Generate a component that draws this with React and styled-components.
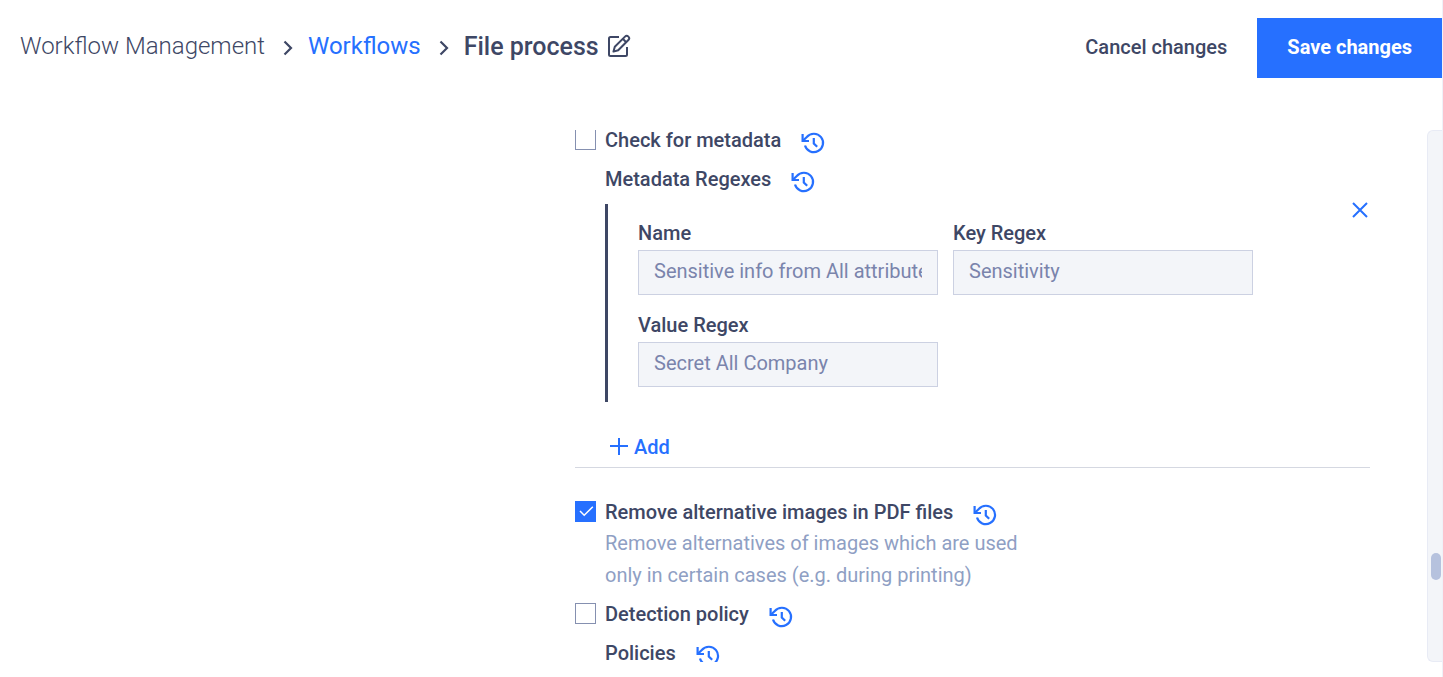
import React, { useState } from "react";
import styled, { createGlobalStyle } from "styled-components";

const GlobalStyle = createGlobalStyle`
  * {
    box-sizing: border-box;
  }

  body {
    margin: 0;
    background: #ffffff;
    color: #3e4765;
    font-family: Roboto, "Liberation Sans", sans-serif;
    font-size: 20px;
    font-weight: 500;
  }

  button,
  input {
    font: inherit;
  }
`;

const Page = styled.div`
  height: 100vh;
  display: flex;
  flex-direction: column;
  padding: 18px 0 15px;
  border-right: 1px solid #eff1f8;
  overflow: hidden;
`;

const Header = styled.header`
  display: flex;
  align-items: flex-start;
  justify-content: space-between;
  margin-bottom: 52px;
`;

const Breadcrumb = styled.nav`
  display: flex;
  align-items: center;
  height: 56px;
  padding-left: 20px;
  font-size: 24px;
  white-space: nowrap;
`;

const Crumb = styled.a`
  color: ${({ $active }) => ($active ? "#2670ff" : "inherit")};
  font-weight: ${({ $active }) => ($active ? 400 : 300)};
  text-decoration: none;
`;

const Current = styled.h1`
  margin: 0;
  font-size: 25px;
  font-weight: 500;
`;

const Chevron = styled.svg`
  width: 12px;
  height: 16px;
  margin: 4px 14px 0 17px;
`;

const IconButton = styled.button`
  display: flex;
  align-items: center;
  justify-content: center;
  flex: none;
  width: ${({ $size }) => $size || 24}px;
  height: ${({ $size }) => $size || 24}px;
  padding: 0;
  border: 0;
  background: none;
  color: ${({ $dark }) => ($dark ? "inherit" : "#2670ff")};
  cursor: pointer;
`;

const EditButton = styled(IconButton)`
  margin-left: 8px;
`;

const Actions = styled.div`
  display: flex;
`;

const Button = styled.button`
  height: 60px;
  padding: 0 30px 2px;
  border: 0;
  background: ${({ $primary }) => ($primary ? "#2670ff" : "transparent")};
  color: ${({ $primary }) => ($primary ? "#ffffff" : "inherit")};
  font-weight: ${({ $primary }) => ($primary ? 700 : 500)};
  white-space: nowrap;
  cursor: pointer;
`;

const Body = styled.main`
  flex: 1;
  min-height: 0;
  display: flex;
`;

const Viewport = styled.div`
  flex: 1;
  min-width: 0;
  padding: 0 57px 0 575px;
  overflow: hidden;
`;

const Settings = styled.div`
  margin-top: -10px;
`;

const Track = styled.div`
  display: flex;
  flex-direction: column;
  align-items: flex-end;
  width: 15px;
  border: 1px solid #e8ebf5;
  border-right: 0;
  border-radius: 6px 0 0 6px;
  background: #f3f5f9;
`;

const TrackSpace = styled.div`
  flex: ${({ $grow }) => $grow};
`;

const Thumb = styled.div`
  width: 10px;
  height: 27px;
  margin-right: 1px;
  border-radius: 5px;
  background: #b6c2de;
`;

const Row = styled.div`
  display: flex;
  align-items: center;
  height: 39px;
  padding-left: ${({ $indent }) => ($indent ? 30 : 0)}px;
`;

const CheckLabel = styled.label`
  display: flex;
  align-items: center;
  gap: 9px;
`;

const BoxWrap = styled.span`
  display: grid;

  > * {
    grid-area: 1 / 1;
  }

  svg {
    pointer-events: none;
  }
`;

const Box = styled.input`
  appearance: none;
  width: 21px;
  height: 21px;
  margin: 0;
  border: 1px solid #8590b0;
  background: #ffffff;

  &:checked {
    border-color: #2670ff;
    background: #2670ff;
  }
`;

const HistoryButton = styled(IconButton)`
  margin: 6px 0 0 20px;
`;

const Description = styled.p`
  max-width: 460px;
  margin: -4px 0 3px;
  padding-left: 30px;
  color: #8f9fc4;
  font-weight: 400;
  line-height: 32px;
`;

const Section = styled.section`
  padding-bottom: 5px;
  margin-bottom: 24px;
  border-bottom: 1px solid #d5d8e1;
`;

const Group = styled.div`
  display: flex;
  align-items: flex-start;
  justify-content: space-between;
  margin: 2px 0 30px;
  padding-left: 30px;
`;

const Fields = styled.div`
  flex: 1;
  display: flex;
  flex-wrap: wrap;
  gap: 16px 15px;
  margin-top: 4px;
  padding: 15px 0 15px 30px;
  border-left: 3px solid #3e4765;
`;

const Field = styled.label`
  width: 300px;
  line-height: 28px;
`;

const TextInput = styled.input`
  display: block;
  width: 100%;
  height: 45px;
  margin-top: 3px;
  padding: 0 15px 3px;
  border: 1px solid #ccd1e2;
  border-radius: 0;
  outline: 0;
  background: #f3f5f9;
  color: #7a84ac;
  font-weight: 400;
`;

const AddButton = styled.button`
  display: flex;
  align-items: center;
  gap: 5px;
  height: 30px;
  margin-left: 34px;
  padding: 0;
  border: 0;
  background: none;
  color: #2670ff;
  cursor: pointer;
`;

const HistoryIcon = () => (
  <svg
    width="24"
    height="24"
    viewBox="0 0 24 24"
    fill="none"
    stroke="currentColor"
    strokeWidth="2.2"
  >
    <path d="M1.6 3v7H8" />
    <path d="M1.6 10l4.2-4A9.2 9.2 0 1 1 4 14.5" />
    <path d="M12.8 7v5.5l3.4 3.3" />
  </svg>
);

const EditIcon = () => (
  <svg
    width="24"
    height="24"
    viewBox="0 0 24 24"
    fill="none"
    stroke="currentColor"
    strokeWidth="2"
    strokeLinejoin="round"
  >
    <path d="M12 3H3.5Q2 3 2 4.5v16Q2 22 3.5 22h15q1.500 0 1.500-1.500V13" />
    <path d="M6.5 17.600l1.300-4.800L18 2.600a2.350 2.350 0 0 1 3.400 3.400L11.200 16.200z" />
    <path d="M15.800 4.800l3.400 3.400" />
  </svg>
);

const Separator = () => (
  <Chevron viewBox="0 0 12 16" fill="none" stroke="currentColor" strokeWidth="2.2">
    <path d="M2.5 1.500L9 8l-6.500 6.500" />
  </Chevron>
);

const History = () => (
  <HistoryButton type="button" aria-label="Restore default">
    <HistoryIcon />
  </HistoryButton>
);

const CheckRow = ({ label, defaultChecked = false }) => {
  const [checked, setChecked] = useState(defaultChecked);

  return (
    <Row>
      <CheckLabel>
        <BoxWrap>
          <Box
            type="checkbox"
            checked={checked}
            onChange={(e) => setChecked(e.target.checked)}
          />
          {checked && (
            <svg width="21" height="21" fill="none" stroke="#fff" strokeWidth="1.5">
              <path d="M5 10l4.200 4.200 8.600-8.400" />
            </svg>
          )}
        </BoxWrap>
        {label}
      </CheckLabel>
      <History />
    </Row>
  );
};

const fields = [
  { label: "Name", value: "Sensitive info from All attributes" },
  { label: "Key Regex", value: "Sensitivity" },
  { label: "Value Regex", value: "Secret All Company" },
];

const App = () => {
  return (
    <>
      <GlobalStyle />
      <Page>
        <Header>
          <Breadcrumb>
            <Crumb href="#">Workflow Management</Crumb>
            <Separator />
            <Crumb href="#" $active>
              Workflows
            </Crumb>
            <Separator />
            <Current>File process</Current>
            <EditButton type="button" $dark aria-label="Rename">
              <EditIcon />
            </EditButton>
          </Breadcrumb>
          <Actions>
            <Button type="button">Cancel changes</Button>
            <Button type="button" $primary>
              Save changes
            </Button>
          </Actions>
        </Header>
        <Body>
          <Viewport>
            <Settings>
              <Section>
                <CheckRow label="Check for metadata" />
                <Row $indent>
                  Metadata Regexes
                  <History />
                </Row>
                <Group>
                  <Fields>
                    {fields.map(({ label, value }) => (
                      <Field key={label}>
                        {label}
                        <TextInput type="text" defaultValue={value} />
                      </Field>
                    ))}
                  </Fields>
                  <IconButton type="button" $size={20} aria-label="Remove">
                    <svg width="20" height="20" stroke="currentColor" strokeWidth="2">
                      <path d="M3 3l14 14M17 3L3 17" />
                    </svg>
                  </IconButton>
                </Group>
                <AddButton type="button">
                  <svg width="20" height="20" stroke="currentColor" strokeWidth="2">
                    <path d="M10 1v17M1 9h18" />
                  </svg>
                  Add
                </AddButton>
              </Section>
              <CheckRow label="Remove alternative images in PDF files" defaultChecked />
              <Description>
                Remove alternatives of images which are used only in certain cases
                (e.g. during printing)
              </Description>
              <CheckRow label="Detection policy" />
              <Row $indent>
                Policies
                <History />
              </Row>
            </Settings>
          </Viewport>
          <Track>
            <TrackSpace $grow={424} />
            <Thumb />
            <TrackSpace $grow={81} />
          </Track>
        </Body>
      </Page>
    </>
  );
};

export default App;
